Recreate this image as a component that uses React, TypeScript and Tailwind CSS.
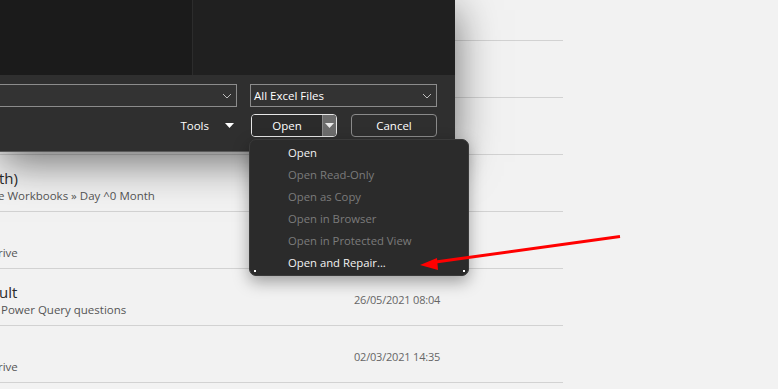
import React from 'react';

const font = { fontFamily: '"Open Sans", "Noto Sans", Arial, sans-serif' };

interface RowProps {
  title?: string;
  sub?: string;
  date?: string;
}

const rows: RowProps[] = [
  {},
  {},
  {},
  { title: 'th)', sub: 'e Workbooks » Day ^0 Month' },
  { sub: 'rive' },
  { title: 'ult', sub: ' Power Query questions', date: '26/05/2021 08:04' },
  { sub: 'rive', date: '02/03/2021 14:35' },
];

const Row: React.FC<RowProps & { first?: boolean }> = ({ title, sub, date, first }) => (
  <div
    className={`grid grid-cols-[354px_1fr] border-b border-[#d2d2d2] w-[563px] ${
      first ? 'h-[41px]' : 'h-[57px]'
    }`}
  >
    <div className="pt-[13px] whitespace-nowrap">
      <div className="text-[15px] leading-[20px] text-[#2b2b2b] h-[20px] -ml-[1px]">{title}</div>
      <div className="text-[11.5px] leading-[16px] text-[#555] -ml-[2px] whitespace-pre">{sub}</div>
    </div>
    <div className="flex items-center pt-[6px] text-[11px] text-[#666] whitespace-nowrap tracking-[-0.2px]">
      {date}
    </div>
  </div>
);

const Chevron = () => (
  <svg width="10" height="6" viewBox="0 0 10 6" className="shrink-0">
    <path d="M1 1 L5 5 L9 1" fill="none" stroke="#bdbdbd" strokeWidth="1" />
  </svg>
);

const Tri = ({ color = '#ffffff' }: { color?: string }) => (
  <svg width="9" height="5" viewBox="0 0 9 5">
    <path d="M0 0 H9 L4.5 5 Z" fill={color} />
  </svg>
);

const menuItems = [
  { label: 'Open', enabled: true },
  { label: 'Open Read-Only', enabled: false },
  { label: 'Open as Copy', enabled: false },
  { label: 'Open in Browser', enabled: false },
  { label: 'Open in Protected View', enabled: false },
  { label: 'Open and Repair...', enabled: true },
];

export default function App() {
  return (
    <div className="relative w-[778px] h-[389px] bg-[#f2f2f2] overflow-hidden" style={font}>
      {/* file list behind the dialog */}
      <div className="flex flex-col">
        {rows.map((r, i) => (
          <Row key={i} {...r} first={i === 0} />
        ))}
      </div>

      {/* Open dialog */}
      <div className="absolute top-0 left-0 w-[455px] h-[152px] flex flex-col border-b border-[#5a5a5a] shadow-[0_10px_40px_rgba(0,0,0,0.55)]">
        <div className="h-[75px] flex">
          <div className="w-[193px] bg-[#1b1b1b] border-r border-[#2c2c2c]" />
          <div className="flex-1 bg-[#202020]" />
        </div>
        <div className="flex-1 bg-[#2f2f2f] flex flex-col gap-[7px] pt-[9px]">
          <div className="flex items-center h-[23px]">
            <div className="w-[237px] h-[23px] border border-[#8c8c8c] border-l-0 bg-[#333] flex items-center justify-end pr-[4px]">
              <Chevron />
            </div>
            <div className="ml-[13px] w-[187px] h-[23px] border border-[#8c8c8c] bg-[#333] flex items-center justify-between pl-[3px] pr-[4px]">
              <span className="text-[11.5px] text-white">All Excel Files</span>
              <Chevron />
            </div>
          </div>
          <div className="flex items-center h-[23px]">
            <div className="w-[251px] flex items-center justify-end pr-[17px] gap-[16px]">
              <span className="text-[11.5px] text-white">Tools</span>
              <Tri />
            </div>
            <div className="w-[86px] h-[23px] flex rounded-[4px] border border-[#e6e6e6] overflow-hidden">
              <div className="flex-1 flex items-center justify-center text-[11.5px] text-white bg-[#2b2b2b]">Open</div>
              <div className="w-[14px] bg-[#6c6c6c] border-l border-[#8a8a8a] flex items-center justify-center">
                <Tri color="#e8e8e8" />
              </div>
            </div>
            <div className="ml-[14px] w-[86px] h-[23px] rounded-[4px] border border-[#8a8a8a] flex items-center justify-center text-[11.5px] text-white">
              Cancel
            </div>
          </div>
        </div>
      </div>

      {/* split button menu */}
      <div className="absolute left-[249px] top-[139px] w-[220px] h-[137px] rounded-[7px] bg-[#2b2b2b] border border-[#3a3a3a] shadow-[0_6px_16px_rgba(0,0,0,0.35)] pt-[2px]">
        {menuItems.map((m) => (
          <div
            key={m.label}
            className={`h-[22px] flex items-center pl-[38px] text-[11.3px] ${
              m.enabled ? 'text-[#f3f3f3]' : 'text-[#7b7b7b]'
            }`}
          >
            {m.label}
          </div>
        ))}
        <span className="absolute left-[4px] bottom-[3px] w-[2px] h-[2px] bg-white" />
        <span className="absolute right-[3px] bottom-[3px] w-[2px] h-[2px] bg-white" />
      </div>

      {/* annotation arrow */}
      <svg className="absolute left-0 top-0 pointer-events-none" width="778" height="389">
        <line x1="620" y1="236.5" x2="432" y2="262.5" stroke="#ff0000" strokeWidth="3" />
        <path d="M420 265 L437 258 L438 270 Z" fill="#ff0000" />
      </svg>
    </div>
  );
}
